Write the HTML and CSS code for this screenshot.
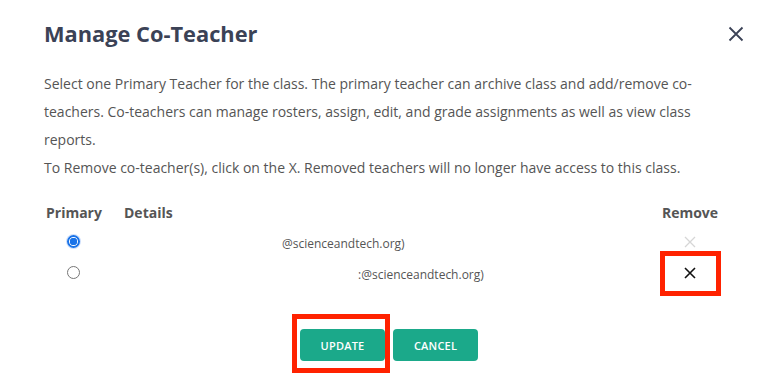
FILE: index.html
```html
<!DOCTYPE html>
<html>
<head>
<meta charset="utf-8">
<link rel="stylesheet" href="styles.css">
</head>
<body>
<div class="modal">
  <div class="header">
    <h1 class="title">Manage Co-Teacher</h1>
    <button class="close" aria-label="Close">
      <svg width="16" height="16" viewBox="0 0 16 16"><path d="M1.5 1.5 L14.5 14.5 M14.5 1.5 L1.5 14.5" stroke="#3b4256" stroke-width="1.8" fill="none"/></svg>
    </button>
  </div>
  <div class="desc">
    <p>Select one Primary Teacher for the class. The primary teacher can archive class and add/remove co-teachers. Co-teachers can manage rosters, assign, edit, and grade assignments as well as view class reports.</p>
    <p>To Remove co-teacher(s), click on the X. Removed teachers will no longer have access to this class.</p>
  </div>
  <div class="table">
    <div class="thead">
      <div class="c-primary">Primary</div>
      <div class="c-details">Details</div>
      <div class="c-remove">Remove</div>
    </div>
    <div class="row">
      <div class="c-primary"><span class="radio checked"></span></div>
      <div class="c-details"><span class="email e1">@scienceandtech.org)</span></div>
      <div class="c-remove">
        <span class="x"><svg width="12" height="12" viewBox="0 0 12 12"><path d="M1 1 L11 11 M11 1 L1 11" stroke="#d6d6d6" stroke-width="1.3" fill="none"/></svg></span>
      </div>
    </div>
    <div class="row">
      <div class="c-primary"><span class="radio"></span></div>
      <div class="c-details"><span class="email e2">:@scienceandtech.org)</span></div>
      <div class="c-remove">
        <span class="x"><svg width="12" height="12" viewBox="0 0 12 12"><path d="M1 1 L11 11 M11 1 L1 11" stroke="#111" stroke-width="1.6" fill="none"/></svg></span>
        <span class="mark mark-x"></span>
      </div>
    </div>
  </div>
  <div class="footer">
    <span class="btn-wrap"><button class="btn">UPDATE</button><span class="mark mark-btn"></span></span>
    <button class="btn">CANCEL</button>
  </div>
</div>
</body>
</html>
```
FILE: styles.css
```css
* { box-sizing: border-box; }
html, body { margin: 0; padding: 0; background: #fff; }
body { font-family: "Open Sans", "Noto Sans", sans-serif; width: 772px; height: 384px; overflow: hidden; }
.modal { padding: 0 0 0 44px; }
.header { display: flex; justify-content: space-between; align-items: center; height: 70px; padding: 0 28px 4px 0; }
.title { margin: 0; font-size: 21.8px; font-weight: 700; color: #3b4256; }
.close { border: 0; background: none; padding: 0; width: 16px; height: 16px; display: flex; margin-top: 2px; }
.desc { width: 650px; font-size: 14px; color: #555; line-height: 28px; }
.desc p { margin: 0; }
.table { margin-top: 16px; width: 677px; }
.thead, .row { display: flex; align-items: center; }
.thead { font-size: 14px; font-weight: 700; color: #555; height: 28px; }
.row { height: 31px; }
.c-primary { width: 80px; display: flex; padding-left: 23px; }
.thead .c-primary { padding-left: 2px; }
.c-details { flex: 1; }
.c-remove { width: 62px; display: flex; justify-content: center; position: relative; }
.radio { width: 13px; height: 13px; border-radius: 50%; border: 1px solid #767676; display: block; background: #fff; }
.radio.checked { border: 2px solid #1a73e8; background: radial-gradient(circle, #1a73e8 0 3.5px, #fff 4px); box-shadow: 0 0 0 1px #cfe0fb; }
.email { font-size: 12px; color: #555; }
.e1 { padding-left: 158px; }
.e2 { padding-left: 234px; }
.x { display: flex; align-items: center; justify-content: center; width: 12px; height: 12px; }
.mark { position: absolute; border: 5px solid #ff2200; pointer-events: none; }
.mark-x { left: 1px; top: -16px; width: 61px; height: 45px; }
.footer { display: flex; gap: 8px; padding-left: 256px; margin-top: 41px; align-items: center; }
.btn-wrap { position: relative; display: flex; }
.mark-btn { left: -8px; top: -15px; width: 98px; height: 59px; }
.btn { border: 0; background: #1ba98a; color: #fff; font-family: "Open Sans", sans-serif; font-size: 11px; font-weight: 600; border-radius: 4px; width: 85px; height: 32px; letter-spacing: 0.2px; padding: 0; }
```
